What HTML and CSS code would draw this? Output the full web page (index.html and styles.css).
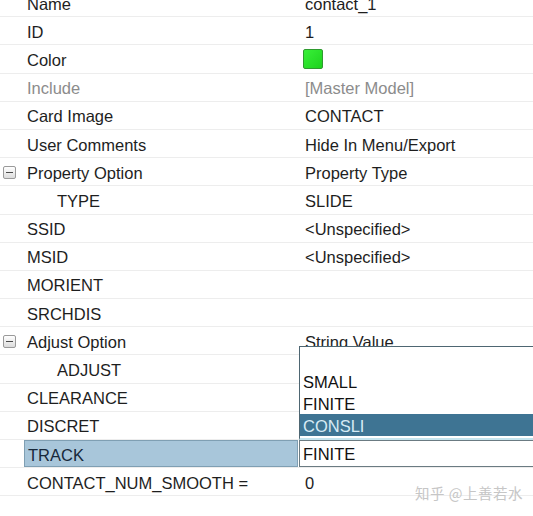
FILE: index.html
```html
<!DOCTYPE html>
<html lang="en">
<head>
  <meta charset="UTF-8">
  <title>Contact Properties</title>
  <link rel="stylesheet" href="styles.css">
</head>
<body>
  <div class="grid">
    <div class="row"><div class="gutter"></div><div class="name">Name</div><div class="value">contact_1</div></div>
    <div class="row"><div class="gutter"></div><div class="name">ID</div><div class="value">1</div></div>
    <div class="row"><div class="gutter"></div><div class="name">Color</div><div class="value"><span class="swatch"></span></div></div>
    <div class="row muted"><div class="gutter"></div><div class="name">Include</div><div class="value">[Master Model]</div></div>
    <div class="row"><div class="gutter"></div><div class="name">Card Image</div><div class="value">CONTACT</div></div>
    <div class="row"><div class="gutter"></div><div class="name">User Comments</div><div class="value">Hide In Menu/Export</div></div>
    <div class="row"><div class="gutter"><span class="expander"></span></div><div class="name">Property Option</div><div class="value">Property Type</div></div>
    <div class="row"><div class="gutter"></div><div class="name sub">TYPE</div><div class="value">SLIDE</div></div>
    <div class="row"><div class="gutter"></div><div class="name">SSID</div><div class="value">&lt;Unspecified&gt;</div></div>
    <div class="row"><div class="gutter"></div><div class="name">MSID</div><div class="value">&lt;Unspecified&gt;</div></div>
    <div class="row"><div class="gutter"></div><div class="name">MORIENT</div><div class="value"></div></div>
    <div class="row"><div class="gutter"></div><div class="name">SRCHDIS</div><div class="value"></div></div>
    <div class="row"><div class="gutter"><span class="expander"></span></div><div class="name">Adjust Option</div><div class="value">String Value</div></div>
    <div class="row"><div class="gutter"></div><div class="name sub">ADJUST</div><div class="value"></div></div>
    <div class="row"><div class="gutter"></div><div class="name">CLEARANCE</div><div class="value"></div></div>
    <div class="row"><div class="gutter"></div><div class="name">DISCRET</div><div class="value"></div></div>
    <div class="row selected">
      <div class="gutter"></div>
      <div class="name">TRACK</div>
      <div class="value combo-cell">
        <div class="combo-list">
          <div class="option"></div>
          <div class="option">SMALL</div>
          <div class="option">FINITE</div>
          <div class="option active">CONSLI</div>
        </div>
        <div class="combo-field">FINITE</div>
      </div>
    </div>
    <div class="row"><div class="gutter"></div><div class="name">CONTACT_NUM_SMOOTH =</div><div class="value">0</div></div>
  </div>

  <div class="watermark">知乎 @上善若水</div>
</body>
</html>
```

FILE: styles.css
```css
* {
  margin: 0;
  padding: 0;
  box-sizing: border-box;
}

body {
  width: 533px;
  height: 516px;
  overflow: hidden;
  background: #ffffff;
  font-family: 'Liberation Sans', Arial, sans-serif;
  font-size: 16.5px;
  color: #1e1e1e;
  position: relative;
}

.grid {
  margin-top: -11px;
  position: relative;
}

.row {
  display: grid;
  grid-template-columns: 24px 274px 1fr;
  height: 28.2px;
  border-bottom: 1px solid #ededed;
}

.gutter {
  display: flex;
  align-items: center;
  padding-left: 3px;
}

.name,
.value {
  display: flex;
  align-items: center;
  white-space: nowrap;
  padding-top: 3px;
}

.name {
  padding-left: 3px;
}

.name.sub {
  padding-left: 33px;
}

.value {
  padding-left: 7px;
}

.muted .name,
.muted .value {
  color: #8c8c8c;
}

.expander {
  width: 13px;
  height: 13px;
  border: 1px solid #9a9a9a;
  border-radius: 2px;
  background: linear-gradient(#ffffff, #dcdcdc);
  position: relative;
  margin-top: 2px;
}

.expander::after {
  content: '';
  position: absolute;
  left: 2px;
  right: 2px;
  top: 5px;
  height: 1px;
  background: #4a4a4a;
}

.swatch {
  width: 20px;
  height: 20px;
  border: 1px solid #2f9a2f;
  border-radius: 2px;
  background: linear-gradient(135deg, #38f038, #1ed21e);
  margin-left: -2px;
  margin-top: -2px;
}

.selected .name {
  background: #a8c6da;
  border: 1px solid #7f9fb3;
  color: #17283a;
}

.combo-cell {
  position: relative;
  padding-left: 1px;
  padding-top: 0;
}

.combo-field {
  width: 100%;
  height: 100%;
  border: 1px solid #6b7b82;
  border-right: none;
  background: #ffffff;
  padding-left: 3px;
  padding-top: 2px;
  display: flex;
  align-items: center;
  color: #111111;
}

.combo-list {
  position: absolute;
  left: 1px;
  right: -10px;
  bottom: 100%;
  height: 94px;
  background: #ffffff;
  border: 1px solid #4e6672;
  border-bottom: 2px solid #c4e4ee;
  padding-top: 1px;
}

.option {
  height: 22px;
  line-height: 24px;
  padding-left: 3px;
  color: #111111;
}

.option.active {
  background: #3e7493;
  color: #d6ebf5;
}

.watermark {
  position: absolute;
  left: 415px;
  top: 482px;
  font-family: 'Noto Sans CJK SC', sans-serif;
  font-size: 14.5px;
  color: #c6c6c6;
  letter-spacing: 0.5px;
}
```
